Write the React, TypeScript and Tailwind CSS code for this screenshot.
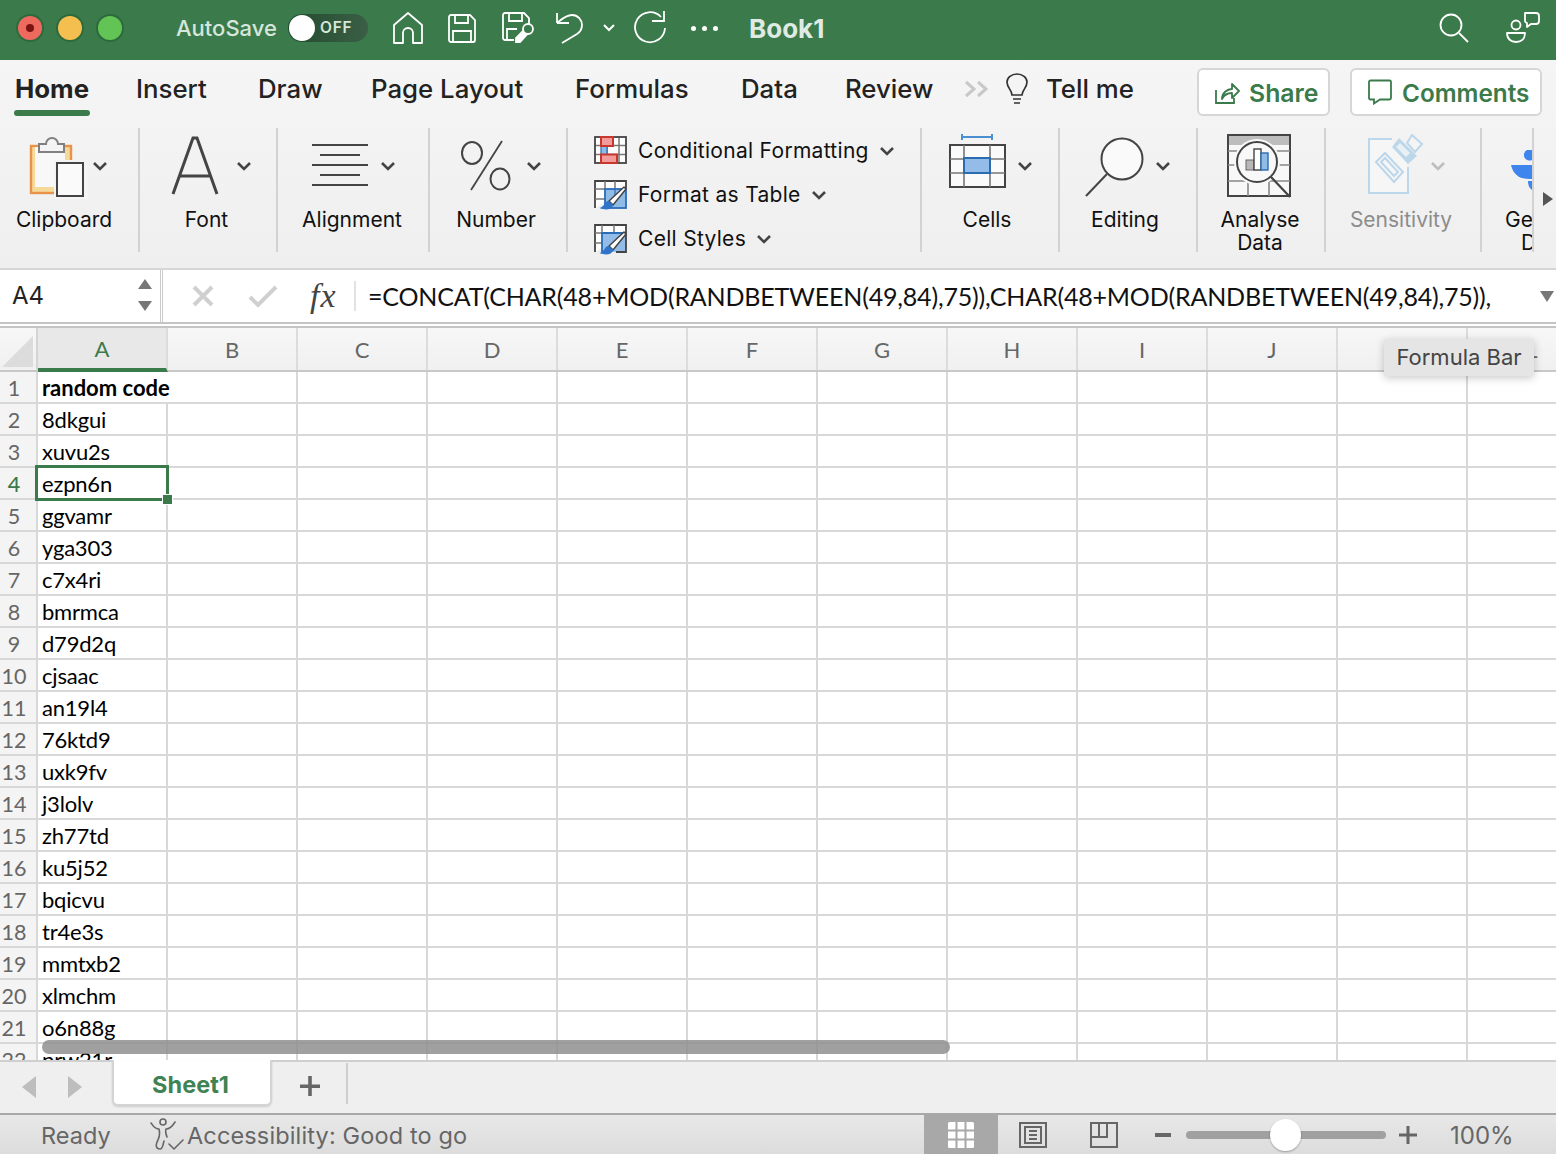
import React from "react";

const rows = ["random code","8dkgui","xuvu2s","ezpn6n","ggvamr","yga303","c7x4ri","bmrmca","d79d2q","cjsaac","an19l4","76ktd9","uxk9fv","j3lolv","zh77td","ku5j52","bqicvu","tr4e3s","mmtxb2","xlmchm","o6n88g","prw21r"];
const cols = ["A","B","C","D","E","F","G","H","I","J","K","L"];

function Chev({ x, y, c = "#444" }: { x: number; y: number; c?: string }) {
  return <path d={`M${x} ${y}l6 6 6-6`} fill="none" stroke={c} strokeWidth="2.6" />;
}

function GroupIcon({ x, w, children }: { x: number; w: number; children: React.ReactNode }) {
  return (
    <svg width={w} height={79} viewBox={`${x} 128 ${w} 79`} className="block shrink-0">
      {children}
    </svg>
  );
}

function Group({ w, x, label, label2, pr, gray, children }: { w: number; x: number; label: string; label2?: string; pr: number; gray?: boolean; children: React.ReactNode }) {
  return (
    <div className="flex flex-col h-[124px] border-r-2 border-[#d2d2d2] shrink-0 overflow-hidden" style={{ width: w }}>
      <GroupIcon x={x} w={w - 2}>{children}</GroupIcon>
      <div className={`text-center text-[21px] leading-[23px] mt-[1px] ${gray ? "text-[#8c8c8c]" : "text-[#111]"}`} style={{ paddingRight: pr }}>
        <div>{label}</div>
        {label2 && <div>{label2}</div>}
      </div>
    </div>
  );
}

function Brush({ dy = 0 }: { dy?: number }) {
  return (
    <g transform={`translate(0 ${dy})`}>
      <path d="M32 9L30 7 15 21l4 4z" fill="#fff" stroke="#444" strokeWidth="1.5" strokeLinejoin="round" />
      <path d="M14.500 21c-4 0-3 5-9 7 6 2.500 12 2 14-3z" fill="#2f74c8" />
    </g>
  );
}

function SmallGrid({ kind }: { kind: 0 | 1 | 2 }) {
  return (
    <svg width="34" height="31" viewBox="0 0 34 31" className="shrink-0" overflow="visible">
      {kind === 0 && (
        <>
          <rect x="1" y="2" width="31" height="26" fill="#fff" />
          <path d="M1 10.500h31M1 19.500h31M25 2v26M13 2v26" stroke="#777" strokeWidth="1.500" />
          <rect x="7" y="10" width="6" height="10" fill="#8fbbe6" stroke="#2b6cb8" strokeWidth="1.200" />
          <rect x="1" y="2" width="31" height="26" fill="none" stroke="#444" strokeWidth="1.800" />
          <rect x="7" y="2" width="12" height="9" fill="#f29b9b" stroke="#c9372c" strokeWidth="2" />
          <rect x="7" y="19.500" width="16" height="8.500" fill="#f29b9b" stroke="#c9372c" strokeWidth="2" />
        </>
      )}
      {kind === 1 && (
        <>
          <path d="M1 29V2h31v7" fill="#fff" stroke="#444" strokeWidth="1.800" />
          <path d="M1 10h10M11 2v8M21 2v8M1 20h10" stroke="#777" strokeWidth="1.500" />
          <rect x="11" y="10" width="21" height="19" fill="#8fbbe6" stroke="#2b6cb8" strokeWidth="1.800" />
          <path d="M21 10v9" stroke="#2b6cb8" strokeWidth="1.200" />
          <Brush dy={1} />
        </>
      )}
      {kind === 2 && (
        <>
          <path d="M1 29V2h31v7" fill="#fff" stroke="#444" strokeWidth="1.800" />
          <path d="M1 10h7M8 2v8M20 2v8M1 20h7" stroke="#777" strokeWidth="1.500" />
          <rect x="8" y="10" width="24" height="19" fill="#93bde8" />
          <path d="M8 29V10h24" fill="none" stroke="#2b6cb8" strokeWidth="1.800" />
          <path d="M32 9v20H22" fill="none" stroke="#444" strokeWidth="1.800" />
          <Brush dy={2} />
        </>
      )}
    </svg>
  );
}

function StyleRow({ kind, label }: { kind: 0 | 1 | 2; label: string }) {
  return (
    <div className="flex items-center h-[44px] pl-[26px] shrink-0">
      <SmallGrid kind={kind} />
      <span className="ml-[10px] mt-[1px] text-[21px] tracking-[0.3px] text-[#111] whitespace-nowrap">{label}</span>
      <svg width="14" height="10" viewBox="0 0 14 10" className="ml-[11px] mt-[2px]"><path d="M1 2l6 6 6-6" fill="none" stroke="#444" strokeWidth="2.6" /></svg>
    </div>
  );
}

function Tab({ w, label, active }: { w: number; label: string; active?: boolean }) {
  return (
    <div className="shrink-0 relative" style={{ width: w }}>
      <span className={`text-[25.8px] leading-[30px] whitespace-nowrap ${active ? "font-bold" : "font-medium"} text-[#222]`}>{label}</span>
      {active && <div className="absolute left-[-1px] top-[36px] w-[76px] h-[6px] rounded-full bg-[#3b7a4b]" />}
    </div>
  );
}

export default function App() {
  return (
    <div className="w-[1556px] h-[1154px] overflow-hidden flex flex-col bg-white font-['Inter',sans-serif]">
      {/* Title bar */}
      <div className="h-[60px] shrink-0 bg-[#3b7a4b] flex items-center pl-[18px] pb-[4px] text-white">
        <div className="w-6 h-6 rounded-full bg-[#ee6a5f] ring-2 ring-[#2f6a3e] flex items-center justify-center"><div className="w-2 h-2 rounded-full bg-[#7a1410]" /></div>
        <div className="w-6 h-6 rounded-full bg-[#f5bf4f] ring-2 ring-[#2f6a3e] ml-4" />
        <div className="w-6 h-6 rounded-full bg-[#61c454] ring-2 ring-[#2f6a3e] ml-4" />
        <span className="ml-[54px] w-[112px] text-[22px] font-medium text-[#d6e6da] whitespace-nowrap">AutoSave</span>
        <div className="w-[80px] h-[28px] rounded-full bg-gradient-to-r from-[#234a2f] to-[#3a5f46] flex items-center pl-[1px]">
          <div className="w-[26px] h-[26px] rounded-full bg-white" />
          <span className="ml-[5px] text-[15.5px] font-semibold tracking-[0.8px] text-[#d6e6da]">OFF</span>
        </div>
        <svg width="30" height="32" viewBox="0 0 30 32" className="ml-[25px]" fill="none" stroke="#fff" strokeWidth="1.8"><path d="M1 13L15 1l14 12v18H20V21a5 5 0 0 0-10 0v10H1z" strokeLinejoin="round" /></svg>
        <svg width="28" height="29" viewBox="0 0 28 29" className="ml-[25px]" fill="none" stroke="#fff" strokeWidth="1.8"><path d="M1 3a2 2 0 0 1 2-2h19l5 5v20a2 2 0 0 1-2 2H3a2 2 0 0 1-2-2z" /><path d="M7 1v8h13V1M5 28V17h18v11" /></svg>
        <svg width="32" height="32" viewBox="0 0 32 32" className="ml-[26px]" fill="none" stroke="#fff" strokeWidth="1.8"><path d="M12 28H3a2 2 0 0 1-2-2V3a2 2 0 0 1 2-2h19l5 5v6" /><path d="M7 1v8h13V1M5 28V17h10" /><path d="M30 17L18 30h-4v-4l12-12z" fill="#fff" stroke="#fff" /><circle cx="26" cy="17" r="5" fill="#3b7a4b" stroke="#fff" /></svg>
        <svg width="30" height="32" viewBox="0 0 30 32" className="ml-[22px]" fill="none" stroke="#fff" strokeWidth="1.8"><path d="M1 11h12M1 11V1M1 11c5-4 9-8 15-8 6 0 10 5 10 10 0 4-2 7-5 9L6 31" /></svg>
        <svg width="14" height="10" viewBox="0 0 14 10" className="ml-[16px]" fill="none" stroke="#fff" strokeWidth="2"><path d="M2 2l5 5 5-5" /></svg>
        <svg width="34" height="34" viewBox="0 0 34 34" className="ml-[17px]" fill="none" stroke="#fff" strokeWidth="1.8"><path d="M28 6a15 15 0 1 0 4 11" /><path d="M19 10h12V0" /></svg>
        <div className="ml-[24px] flex gap-[6px]"><div className="w-[5px] h-[5px] rounded-full bg-white" /><div className="w-[5px] h-[5px] rounded-full bg-white" /><div className="w-[5px] h-[5px] rounded-full bg-white" /></div>
        <span className="ml-[31px] text-[26px] font-bold text-[#dfebe2]">Book1</span>
        <div className="flex-1" />
        <svg width="30" height="30" viewBox="0 0 30 30" fill="none" stroke="#fff" strokeWidth="1.8"><circle cx="12" cy="12" r="10.5" /><path d="M20 20l9 9" /></svg>
        <svg width="34" height="34" viewBox="0 0 34 34" className="ml-[37px] mr-[16px]" fill="none" stroke="#fff" strokeWidth="1.8"><circle cx="10" cy="14" r="4.5" /><path d="M1 22h18c0 6-4 9-9 9s-9-3-9-9z" strokeLinejoin="round" /><path d="M19 2h11a3 3 0 0 1 3 3v5a3 3 0 0 1-3 3h-5l-4 3v-4a3 3 0 0 1-2-2z" strokeLinejoin="round" /></svg>
      </div>

      {/* Ribbon */}
      <div className="h-[208px] shrink-0 bg-gradient-to-b from-[#f5f5f5] to-[#efefef]">
        <div className="h-[68px] flex items-start pl-[15px]">
          <div className="flex items-center mt-[13px]">
            <Tab w={121} label="Home" active />
            <Tab w={122} label="Insert" />
            <Tab w={113} label="Draw" />
            <Tab w={204} label="Page Layout" />
            <Tab w={166} label="Formulas" />
            <Tab w={104} label="Data" />
            <Tab w={120} label="Review" />
            <svg width="24" height="18" viewBox="0 0 24 18" fill="none" stroke="#c8c8c8" strokeWidth="3" className="shrink-0"><path d="M1 2l8 7-8 7M13 2l8 7-8 7" /></svg>
            <svg width="24" height="32" viewBox="0 0 24 32" fill="none" stroke="#333" strokeWidth="1.7" className="ml-[16px] shrink-0"><path d="M7 22c0-5-5-7-5-13a10 8 0 0 1 20 0c0 6-5 8-5 13z" /><path d="M8 26h8M9 30h6" /></svg>
            <div className="ml-[17px] w-[150px] shrink-0"><span className="text-[25.8px] font-medium leading-[30px] text-[#222]">Tell me</span></div>
          </div>
          <div className="ml-[1px] mt-[8px] flex gap-[20px] items-start">
            <div className="w-[133px] h-[48px] rounded-[6px] bg-white border-2 border-[#d6d6d6] flex items-center pl-[15px] text-[#3b7a4b]">
              <svg width="26" height="24" viewBox="0 0 26 24" fill="none" stroke="#3b7a4b" strokeWidth="1.8"><path d="M2 10v13h18v-5" /><path d="M8 19c0-6 5-10 10-10V4l7 7-7 7v-5c-4 0-8 2-10 6z" strokeLinejoin="round" /></svg>
              <span className="ml-[9px] mt-[3px] text-[24.8px] font-semibold whitespace-nowrap">Share</span>
            </div>
            <div className="w-[192px] h-[48px] rounded-[6px] bg-white border-2 border-[#d6d6d6] flex items-center pl-[15px] text-[#3b7a4b]">
              <svg width="26" height="26" viewBox="0 0 26 26" fill="none" stroke="#3b7a4b" strokeWidth="1.8"><path d="M2 3a1.5 1.5 0 0 1 1.5-1.5h19A1.5 1.5 0 0 1 24 3v16a1.5 1.5 0 0 1-1.5 1.5H13l-6 4v-4H3.500A1.5 1.5 0 0 1 2 19z" /></svg>
              <span className="ml-[9px] mt-[3px] text-[24.3px] font-semibold whitespace-nowrap">Comments</span>
            </div>
          </div>
        </div>
        <div className="flex h-[124px]">
          <Group x={0} w={140} label="Clipboard" pr={10}>
            <rect x="31" y="146" width="40" height="47" fill="#f5d998" stroke="#e8924a" strokeWidth="2.400" />
            <rect x="35" y="147" width="30" height="40" fill="#f8f8f8" />
            <path d="M39 144h7a6 6 0 0 1 12 0h6v8H39z" fill="#f4f4f4" stroke="#808080" strokeWidth="2" />
            <rect x="54" y="160" width="34" height="39" fill="#f4f4f4" />
            <rect x="57" y="163" width="26" height="33" fill="#fafafa" stroke="#444" strokeWidth="2" />
            <Chev x={94} y={163} />
          </Group>
          <Group x={140} w={138} label="Font" pr={3}>
            <path d="M173 194L193 138h4l20 56M179 176h32" fill="none" stroke="#444" strokeWidth="3" />
            <Chev x={238} y={163} />
          </Group>
          <Group x={278} w={152} label="Alignment" pr={2}>
            <path d="M312 145h56M320 155h40M312 165h56M320 175h40M312 185h56" stroke="#444" strokeWidth="2" />
            <Chev x={382} y={163} />
          </Group>
          <Group x={430} w={138} label="Number" pr={4}>
            <ellipse cx="472" cy="153" rx="10" ry="11" fill="none" stroke="#444" strokeWidth="2" />
            <ellipse cx="500" cy="179" rx="9.500" ry="10.500" fill="none" stroke="#444" strokeWidth="2" />
            <path d="M502 141L471 190" stroke="#444" strokeWidth="1.800" />
            <Chev x={528} y={163} />
          </Group>
          <div className="w-[354px] h-[124px] border-r-2 border-[#d2d2d2] shrink-0 flex flex-col">
            <StyleRow kind={0} label="Conditional Formatting" />
            <StyleRow kind={1} label="Format as Table" />
            <StyleRow kind={2} label="Cell Styles" />
          </div>
          <Group x={922} w={138} label="Cells" pr={6}>
            <path d="M962 134v6M992 134v6M962 137h30" stroke="#4a90d0" strokeWidth="2" />
            <rect x="950" y="145" width="55" height="42" fill="#fafafa" stroke="#444" strokeWidth="2" />
            <path d="M964 145v42M990 145v42M950 159h55M950 173h55" stroke="#777" strokeWidth="1.600" />
            <rect x="964" y="158" width="26" height="15" fill="#93bde8" stroke="#2b6cb0" strokeWidth="2" />
            <Chev x={1019} y={163} />
          </Group>
          <Group x={1060} w={138} label="Editing" pr={6}>
            <circle cx="1122" cy="159" r="20.500" fill="#fafafa" stroke="#444" strokeWidth="2" />
            <path d="M1107 174L1086 196" stroke="#444" strokeWidth="2" />
            <Chev x={1157} y={163} />
          </Group>
          <Group x={1198} w={128} label="Analyse" label2="Data" pr={2}>
            <rect x="1228" y="135" width="62" height="61" fill="#f8f8f8" stroke="#444" strokeWidth="2" />
            <rect x="1229" y="136" width="60" height="9" fill="#bdbdbd" />
            <path d="M1228 165h62M1228 181h62M1228 151h62M1248 145v51M1269 145v51" stroke="#888" strokeWidth="1.600" />
            <circle cx="1257" cy="162" r="23" fill="#f8f8f8" />
            <circle cx="1257" cy="162" r="20" fill="#f8f8f8" stroke="#444" strokeWidth="2" />
            <rect x="1246" y="160" width="8" height="10" fill="#b8b8b8" stroke="#666" />
            <rect x="1254" y="149" width="7" height="21" fill="#fff" stroke="#444" strokeWidth="1.400" />
            <rect x="1261" y="153" width="7" height="17" fill="#8fbbe6" stroke="#2b6cb0" strokeWidth="1.400" />
            <path d="M1271 177L1290 197" stroke="#444" strokeWidth="2.200" />
          </Group>
          <Group x={1326} w={156} label="Sensitivity" pr={4} gray>
            <path d="M1392 139h-23v54h39v-26" fill="#f6f6f6" stroke="#bcd6ea" strokeWidth="2" />
            <path d="M1376 162l9-9 18 19-9 10zM1381 162l4-4 13 14-4 4z" fill="none" stroke="#bcd6ea" strokeWidth="2" />
            <path d="M1407 143l5-8 10 9-7 8z" fill="#f4f4f4" stroke="#bcd6ea" strokeWidth="2" />
            <path d="M1392 147l7-9 18 18-9 8z" fill="#bcd6ea" />
            <path d="M1396 147l4-4 10 10-4 4z" fill="#e8f0f6" />
            <Chev x={1432} y={163} c="#bdbdbd" />
          </Group>
          <div className="w-[52px] h-[124px] border-r-2 border-[#d2d2d2] shrink-0 flex flex-col overflow-hidden">
            <GroupIcon x={1482} w={50}>
              <path d="M1527 150h5v10a5 5 0 0 1-5-10z" fill="#3e86ee" />
              <path d="M1511 165h21v14h-3c-10 0-16-5-18-14z" fill="#3e86ee" />
              <path d="M1528 181h4v9c-3-2-4-5-4-9z" fill="#3e86ee" />
            </GroupIcon>
            <div className="text-[21px] leading-[23px] mt-[1px] text-[#111] whitespace-nowrap">
              <div className="pl-[23px]">Ge</div>
              <div className="pl-[39px]">D</div>
            </div>
          </div>
          <div className="flex-1 flex items-start pl-[8px] pt-[64px]">
            <svg width="12" height="14" viewBox="0 0 12 14"><path d="M1 0l10 7-10 7z" fill="#555" /></svg>
          </div>
        </div>
      </div>

      {/* Formula bar */}
      <div className="h-[60px] shrink-0 bg-white border-t-2 border-t-[#d6d6d6] border-b-[6px] border-double border-b-[#c4c4c4] flex items-center">
        <div className="w-[163px] h-full shrink-0 border-r-[3px] border-double border-[#ccc] flex items-center pl-[12px]">
          <span className="text-[24px] text-[#222] w-[125px]">A4</span>
          <svg width="16" height="36" viewBox="0 0 16 36"><path d="M8 1l7 10H1zM1 23h14l-7 10z" fill="#777" /></svg>
        </div>
        <svg width="24" height="24" viewBox="0 0 24 24" className="ml-[28px]" fill="none" stroke="#d0d0d0" strokeWidth="4"><path d="M3 3l18 18M21 3L3 21" /></svg>
        <svg width="30" height="24" viewBox="0 0 30 24" className="ml-[33px]" fill="none" stroke="#d0d0d0" strokeWidth="4"><path d="M2 13l8 8L28 3" /></svg>
        <span className="ml-[32px] w-[44px] font-['Liberation_Serif',serif] italic text-[34px] leading-none tracking-[1px] text-[#444]">fx</span>
        <div className="w-[2px] h-[30px] bg-[#e2e2e2]" />
        <span className="ml-[12px] mt-[2px] w-[1172px] font-['Lato',sans-serif] text-[25px] text-[#111] whitespace-nowrap tracking-[-0.19px]">=CONCAT(CHAR(48+MOD(RANDBETWEEN(49,84),75)),CHAR(48+MOD(RANDBETWEEN(49,84),75)),</span>
        <svg width="14" height="11" viewBox="0 0 14 11"><path d="M0 0h14l-7 11z" fill="#777" /></svg>
      </div>

      {/* Grid */}
      <div className="relative h-[732px] shrink-0 overflow-hidden font-['Lato',sans-serif]">
        <div className="flex h-[44px] bg-gradient-to-b from-[#f7f7f7] to-[#f0f0f0] border-b-2 border-[#c8c8c8]">
          <div className="w-[38px] shrink-0 border-r-2 border-[#d4d4d4] flex items-end justify-start pl-[2px] pb-[2px]">
            <svg width="32" height="32" viewBox="0 0 32 32"><path d="M31 0v31H0z" fill="#dcdcdc" /></svg>
          </div>
          {cols.map((c, i) => (
            <div key={c} className={`w-[130px] shrink-0 border-r-2 border-[#dcdcdc] flex items-center justify-center text-[22px] ${i === 0 ? "text-[#3b7a4b] bg-[#e8e8e8] border-b-[4px] border-b-[#3b7a4b] h-[44px]" : "text-[#666]"}`}>{c}</div>
          ))}
        </div>
        {rows.map((r, i) => (
          <div key={r} className="flex h-[32px]">
            <div className={`w-[38px] shrink-0 bg-[#f4f4f4] border-r-2 border-b-2 border-[#d8d8d8] flex items-center pr-[8px] pt-[3px] justify-center text-[21.5px] leading-none ${i === 3 ? "text-[#3b7a4b] font-medium" : "text-[#666]"}`}>{i + 1}</div>
            {cols.map((c, j) => (
              <div key={c} className={`w-[130px] h-[32px] shrink-0 border-b-2 border-[#d8d8d8] relative ${j === 0 && i === 0 ? "" : "border-r-2"}`}>
                {j === 0 && (
                  <span className={`absolute left-[4px] top-0 z-10 text-[22px] leading-[32px] text-black whitespace-nowrap ${i === 0 ? "font-bold tracking-[0px]" : "tracking-[-0.2px]"}`}>{r}</span>
                )}
                {j === 0 && i === 3 && (
                  <>
                    <div className="absolute left-[-3px] top-[-3px] w-[134px] h-[36px] border-[3px] border-[#3b7a4b] z-20" />
                    <div className="absolute left-[124px] top-[26px] w-[11px] h-[11px] bg-[#3b7a4b] border border-white z-30" />
                  </>
                )}
              </div>
            ))}
          </div>
        ))}
        {/* overlay scrollbar */}
        <div className="absolute left-[42px] top-[712px] w-[908px] h-[14px] rounded-full bg-[#8f8f8f]/85 z-30" />
        {/* tooltip */}
        <div className="absolute left-[1384px] top-[11px] w-[150px] h-[37px] rounded-[3px] bg-[#e5e5e5] shadow-[0_2px_8px_rgba(0,0,0,0.22)] flex items-center justify-center font-['Inter',sans-serif] text-[22px] text-[#444] z-40">Formula Bar</div>
      </div>

      {/* Sheet tabs */}
      <div className="h-[53px] shrink-0 bg-[#efefef] border-t-2 border-[#cfcfcf] flex items-start">
        <svg width="16" height="22" viewBox="0 0 16 22" className="ml-[21px] mt-[14px]"><path d="M15 0v22L1 11z" fill="#bdbdbd" /></svg>
        <svg width="16" height="22" viewBox="0 0 16 22" className="ml-[30px] mt-[14px]"><path d="M1 0v22l14-11z" fill="#bdbdbd" /></svg>
        <div className="ml-[29px] -mt-[2px] w-[160px] h-[46px] pt-[5px] pr-[3px] bg-white rounded-b-[6px] border-x-2 border-b-2 border-[#d4d4d4] shadow-[0_1px_2px_rgba(0,0,0,0.15)] flex items-center justify-center text-[23.5px] font-bold text-[#3f8355]">Sheet1</div>
        <svg width="20" height="20" viewBox="0 0 20 20" className="ml-[28px] mt-[14px]"><path d="M0 8.500h20v3.500H0zM8.200 0h3.600v20H8.200z" fill="#666" /></svg>
        <div className="ml-[26px] mt-[1px] w-[2px] h-[41px] bg-[#cfcfcf]" />
      </div>

      {/* Status bar */}
      <div className="h-[42px] shrink-0 bg-gradient-to-b from-[#e8e8e8] to-[#dcdcdc] border-t-2 border-[#a8a8a8] flex items-center text-[#666] relative">
        <span className="ml-[41px] w-[109px] text-[23.5px] pt-[2px]">Ready</span>
        <svg width="34" height="34" viewBox="0 0 34 34" fill="none" stroke="#666" strokeWidth="1.600" strokeLinecap="round" strokeLinejoin="round"><circle cx="13" cy="4" r="3" /><path d="M1 5c2 2 3 6 8 6M25 4c-2 3-4 7-9 7M9 11c1 4 1 7-1 11-3 5-2 9 2 9 3 0 3-5 4-8M16 11c-1 3 0 5 1 8" /><path d="M19 26l5 5 9-9" /></svg>
        <span className="ml-[3px] text-[23.5px] tracking-[0.14px] pt-[2px] whitespace-nowrap w-[737px]">Accessibility: Good to go</span>
        <div className="w-[74px] h-full bg-[#a8a8a8] flex items-center justify-center shrink-0">
          <svg width="26" height="26" viewBox="0 0 26 26"><rect width="26" height="26" rx="1.500" fill="#fff" /><path d="M8.500 0v26M17.500 0v26M0 8.500h26M0 17.500h26" stroke="#a8a8a8" strokeWidth="2" /></svg>
        </div>
        <svg width="28" height="26" viewBox="0 0 28 26" className="ml-[21px] shrink-0" fill="none" stroke="#666" strokeWidth="2"><rect x="1" y="1" width="26" height="24" /><rect x="6" y="5" width="16" height="16" /><path d="M10 9h8M10 13h8M10 17h8" /></svg>
        <svg width="28" height="26" viewBox="0 0 28 26" className="ml-[43px] shrink-0" fill="none" stroke="#666" strokeWidth="2"><rect x="1" y="1" width="26" height="24" /><path d="M1 15h16V1M9 1v14" /></svg>
        <div className="ml-[37px] w-[16px] h-[4px] bg-[#666] shrink-0" />
        <div className="ml-[15px] w-[200px] h-[8px] rounded-full bg-[#a0a0a0] relative shrink-0">
          <div className="absolute left-[84px] top-[-12px] w-[31px] h-[32px] rounded-full bg-white shadow-[0_1px_2px_rgba(0,0,0,0.3)]" />
        </div>
        <svg width="18" height="18" viewBox="0 0 18 18" className="ml-[13px] shrink-0"><path d="M0 7.500h18v3H0zM7.500 0h3v18h-3z" fill="#666" /></svg>
        <span className="ml-[33px] text-[24px] whitespace-nowrap pt-[2px]">100%</span>
      </div>
    </div>
  );
}
